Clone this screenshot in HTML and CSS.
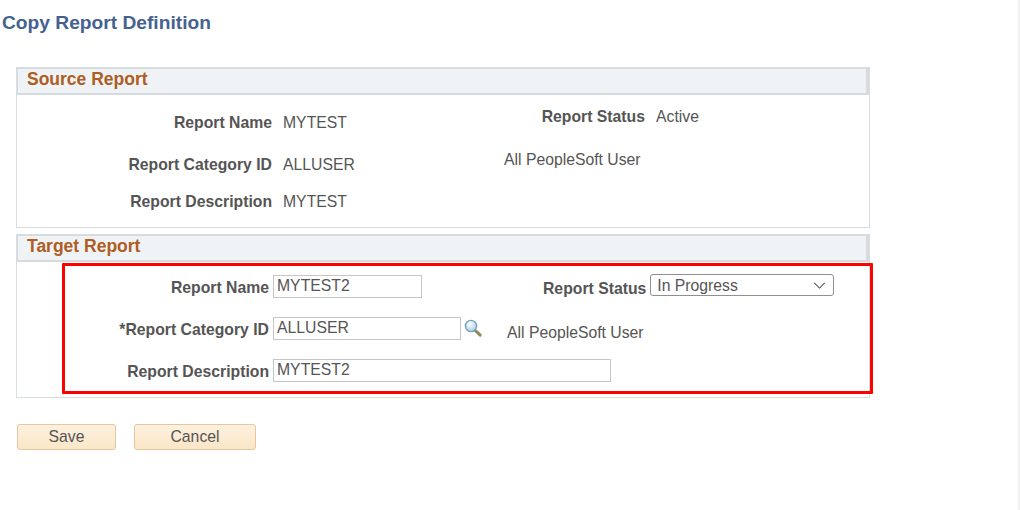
FILE: index.html
```html
<!DOCTYPE html>
<html lang="en">
<head>
<meta charset="utf-8">
<title>Copy Report Definition</title>
<link rel="stylesheet" href="styles.css">
</head>
<body>
<main class="page">
  <h1 class="title">Copy Report Definition</h1>

  <section class="panel panel-source">
    <h2 class="panel-head">Source Report</h2>
    <div class="source-body">
      <div class="col-left">
        <div class="row row-s1"><span class="label">Report Name</span><span class="value">MYTEST</span></div>
        <div class="row row-s2"><span class="label">Report Category ID</span><span class="value">ALLUSER</span></div>
        <div class="row row-s3"><span class="label">Report Description</span><span class="value">MYTEST</span></div>
      </div>
      <div class="col-right">
        <div class="row"><span class="label label-status">Report Status</span><span class="value">Active</span></div>
        <div class="desc-source">All PeopleSoft User</div>
      </div>
    </div>
  </section>

  <section class="panel panel-target">
    <h2 class="panel-head">Target Report</h2>
    <div class="target-body">
      <div class="col-left-t">
        <div class="row-t"><span class="label label-t">Report Name</span><input class="field field-name" type="text" value="MYTEST2"></div>
        <div class="row-t row-t2"><span class="label label-t">*Report Category ID</span><input class="field field-cat" type="text" value="ALLUSER">
          <svg class="lookup" width="20" height="20" viewBox="0 0 20 20" aria-hidden="true">
            <defs><radialGradient id="lens" cx="0.4" cy="0.35" r="0.7"><stop offset="0" stop-color="#ffffff"/><stop offset="1" stop-color="#a5cbe0"/></radialGradient></defs>
            <path d="M11.8 12l5.4 5.2" stroke="#8f8a55" stroke-width="3" stroke-linecap="round" fill="none"/>
            <circle cx="8" cy="8" r="5.6" fill="url(#lens)" stroke="#7ba3b8" stroke-width="1.4"/>
          </svg>
          <span class="value value-cat">All PeopleSoft User</span>
        </div>
        <div class="row-t row-t3"><span class="label label-t">Report Description</span><input class="field field-desc" type="text" value="MYTEST2"></div>
      </div>
      <div class="status-t">
        <span class="label">Report Status</span>
        <span class="select"><span>In Progress</span>
          <svg width="14" height="8" viewBox="0 0 14 8" aria-hidden="true"><path d="M1 1l6 6 6-6" fill="none" stroke="#555" stroke-width="1.2"/></svg>
        </span>
      </div>
    </div>
    <div class="highlight"></div>
  </section>

  <div class="actions">
    <button class="btn btn-save" type="button">Save</button>
    <button class="btn btn-cancel" type="button">Cancel</button>
  </div>
</main>
</body>
</html>
```

FILE: styles.css
```css
* { box-sizing: border-box; }
html, body { margin: 0; height: 100%; background: #fff; }
body { font-family: "Liberation Sans", Arial, sans-serif; font-size: 15.75px; color: #555; overflow: hidden; }
.page { width: 1020px; height: 510px; padding: 12px 0 0 16px; border-right: 2px solid #f1f1f1; }
.title { margin: 0 0 33px -14px; font-size: 19.2px; line-height: 22px; font-weight: 700; color: #45628f; }

.panel { width: 854px; border: 1px solid #d8dde2; position: relative; }
.panel-source { height: 161px; margin-bottom: 6px; }
.panel-target { height: 164px; }
.panel-head { margin: 0; height: 27px; padding-left: 9px; font-size: 17.5px; line-height: 21px; font-weight: 700; color: #ae5d23; background: #f0f3f5; border: 1px solid #d6dbe0; border-width: 1px 3px 2px 1px; }

.label { font-weight: 700; color: #555; white-space: nowrap; flex: none; }
.value { color: #555; white-space: nowrap; }

.source-body { display: flex; }
.col-left { width: 345px; flex: none; }
.row { display: flex; justify-content: flex-end; gap: 11px; }
.col-left .row { width: 345px; justify-content: flex-start; }
.col-left .label { width: 255px; text-align: right; }
.row-s1 { margin-top: 19px; }
.row-s2 { margin-top: 24px; }
.row-s3 { margin-top: 19px; }
.col-right { padding-top: 13px; width: 500px; flex: none; }
.col-right .row { justify-content: flex-start; }
.label-status { width: 283px; text-align: right; }
.desc-source { margin: 25px 0 0 142px; white-space: nowrap; }

.target-body { display: flex; padding-top: 12px; }
.col-left-t { width: 525px; flex: none; }
.row-t { display: flex; align-items: center; height: 24px; }
.row-t2 { margin-top: 18px; }
.row-t3 { margin-top: 18px; }
.row-t .label { padding-top: 3px; }
.label-t { width: 252px; text-align: right; margin-right: 4px; }
.field { height: 23px; flex: none; border: 1px solid #c6c6c6; background: #fff; padding: 0 0 0 3px; font: 15.75px "Liberation Sans", Arial, sans-serif; color: #555; outline: none; }
.field-name { width: 149px; }
.field-cat { width: 188px; }
.field-desc { width: 338px; }
.lookup { margin: 0 0 0 2px; flex: none; }
.value-cat { margin-left: 24px; padding-top: 9px; }

.status-t { display: flex; gap: 4px; align-items: flex-start; padding-left: 1px; }
.status-t .label { margin-top: 6px; }
.select { width: 184px; height: 22px; border: 1px solid #8f8f8f; border-radius: 3px; display: flex; justify-content: space-between; align-items: center; padding: 0 7px 0 6px; color: #555; background: #fff; line-height: 18px; font-size: 15.75px; }
.select span { margin-top: 1px; }
.select svg { width: 13px; height: 7px; }

.highlight { position: absolute; left: 45px; top: 28px; width: 811px; height: 131px; border: 3px solid #fe0000; border-radius: 1px; pointer-events: none; }

.actions { display: flex; gap: 18px; margin: 26px 0 0 1px; }
.btn { height: 26px; border: 1px solid #e5c6a0; border-radius: 3px; background: linear-gradient(#fdf1de, #fbe6c8); font: 15.75px "Liberation Sans", Arial, sans-serif; color: #555; padding: 0; }
.btn-save { width: 99px; }
.btn-cancel { width: 122px; }
```
